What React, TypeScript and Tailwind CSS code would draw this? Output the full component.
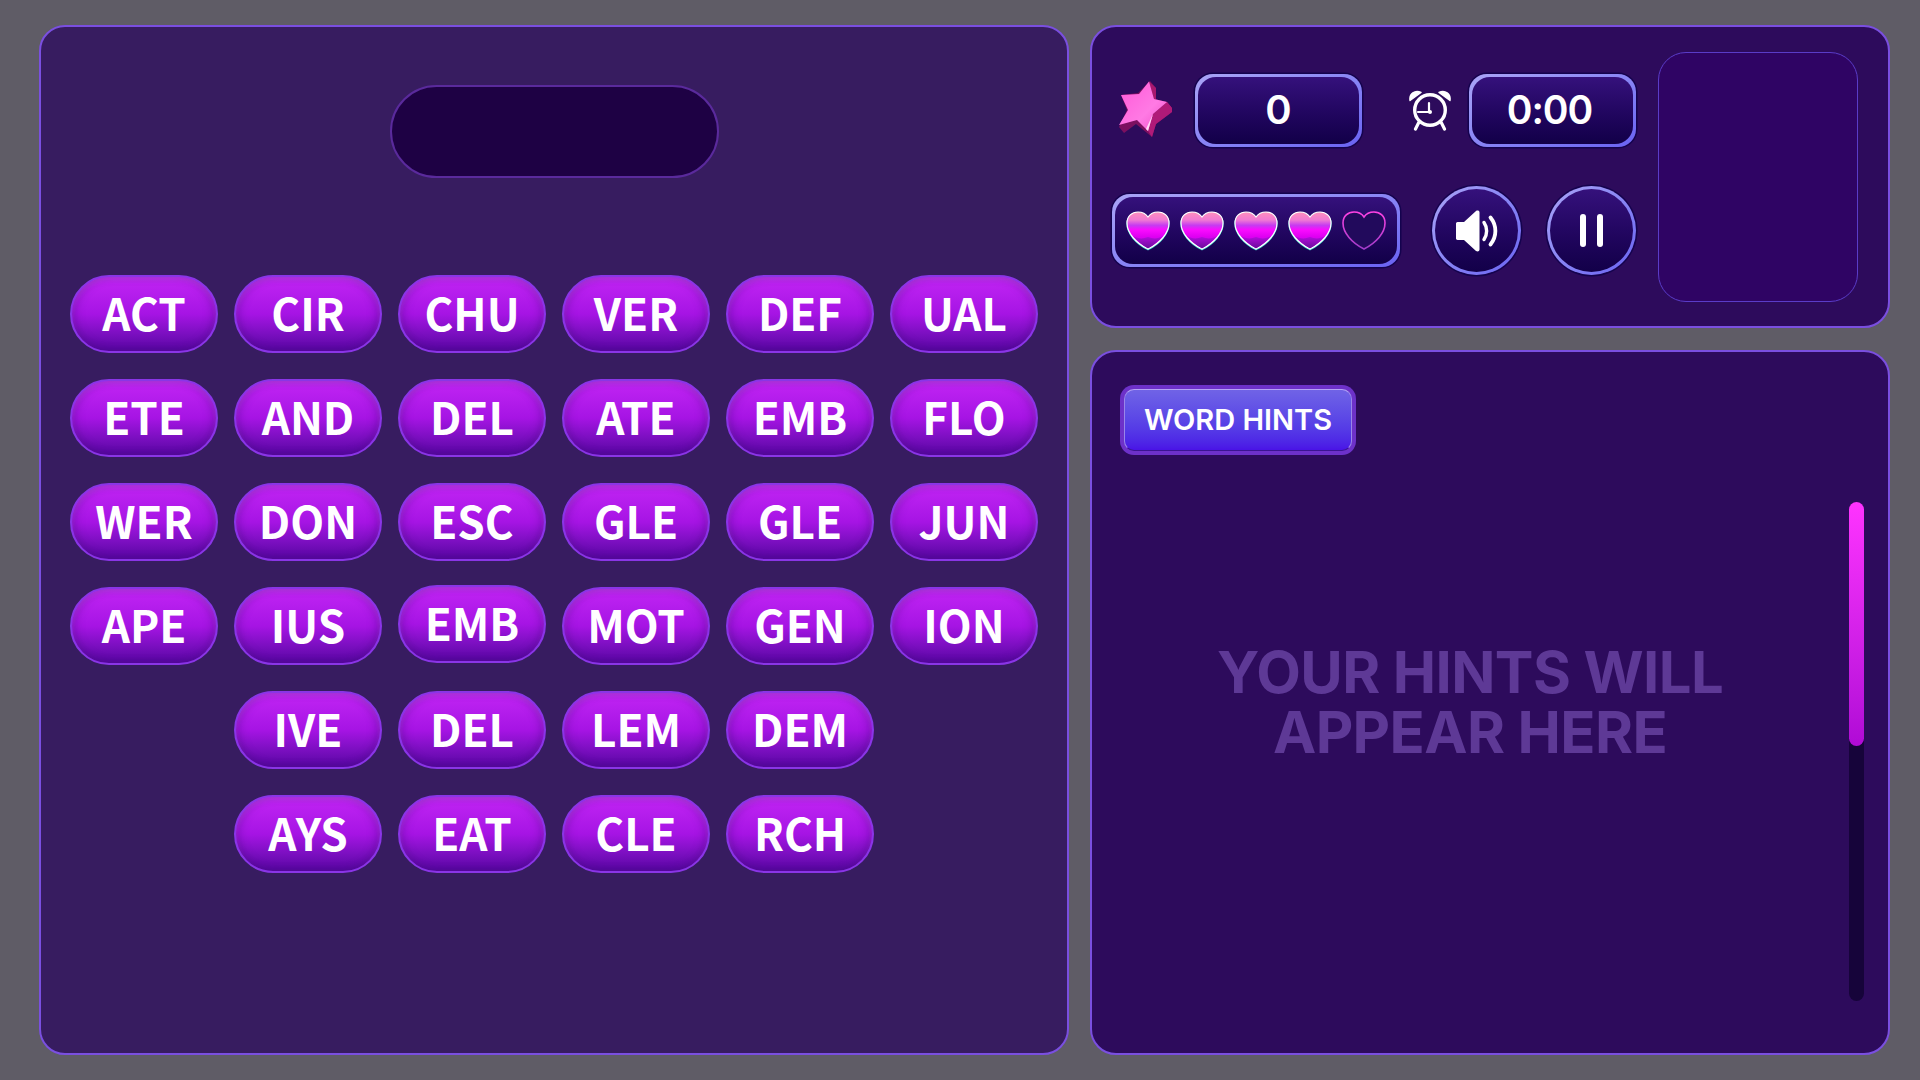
const rows = [
  ["ACT", "CIR", "CHU", "VER", "DEF", "UAL"],
  ["ETE", "AND", "DEL", "ATE", "EMB", "FLO"],
  ["WER", "DON", "ESC", "GLE", "GLE", "JUN"],
  ["APE", "IUS", "EMB", "MOT", "GEN", "ION"],
  ["IVE", "DEL", "LEM", "DEM"],
  ["AYS", "EAT", "CLE", "RCH"],
];

function Pill({ label, raised }: { label: string; raised?: boolean }) {
  return (
    <div
      className={`w-[148px] h-[78px] rounded-full border-2 border-[#8a35e6] bg-gradient-to-b from-[#c224f4] via-[#a614e4] to-[#5806a2] shadow-[inset_0_3px_5px_rgba(255,255,255,0.1),inset_4px_0_8px_rgba(60,10,120,0.28),inset_-4px_0_8px_rgba(60,10,120,0.28)] flex items-center justify-center pb-[4px] text-white font-bold text-[44px] font-['Noto_Sans_CJK_SC',sans-serif] leading-none ${raised ? "-translate-y-0.5" : ""}`}
    >
      {label}
    </div>
  );
}

// gradient ring with dark outline, used for the HUD boxes and round buttons
function Ring({ className, children }: { className: string; children: React.ReactNode }) {
  return (
    <div className={`p-[3px] bg-gradient-to-br from-[#aaa4f6] to-[#6a62f2] shadow-[0_0_0_1.5px_#14034e] ${className}`}>
      <div className="w-full h-full rounded-[inherit] bg-gradient-to-b from-[#35117c] to-[#120048] flex items-center justify-center text-white">
        {children}
      </div>
    </div>
  );
}

const HEART = "M22 38 C10 32 1 22 1 12 C1 5 6 1 12 1 C16 1 20 3 22 6 C24 3 28 1 32 1 C38 1 43 5 43 12 C43 22 34 32 22 38 Z";

function Heart({ id, empty }: { id: string; empty?: boolean }) {
  if (empty) {
    return (
      <svg width="44" height="40" viewBox="0 0 44 40" className="block">
        <defs>
          <linearGradient id={id} x1="0" y1="0" x2="0" y2="1">
            <stop offset="0" stopColor="#ff42e4" />
            <stop offset="1" stopColor="#a03cc8" />
          </linearGradient>
        </defs>
        <path d={HEART} fill="#220a5c" stroke={`url(#${id})`} strokeWidth="1.6" />
      </svg>
    );
  }
  return (
    <svg width="44" height="40" viewBox="0 0 44 40" className="block">
      <defs>
        <linearGradient id={id} x1="0" y1="0" x2="0" y2="1">
          <stop offset="0" stopColor="#ff8fbc" />
          <stop offset="0.22" stopColor="#f078d4" />
          <stop offset="0.36" stopColor="#c63cf0" />
          <stop offset="0.48" stopColor="#fa0cff" />
          <stop offset="0.66" stopColor="#e000f2" />
          <stop offset="1" stopColor="#a808d8" />
        </linearGradient>
        <linearGradient id={`${id}-low`} x1="0" y1="0" x2="0" y2="1">
          <stop offset="0" stopColor="#b80ce0" />
          <stop offset="1" stopColor="#6a0c9c" />
        </linearGradient>
      </defs>
      <path d={HEART} transform="translate(0 0.8)" fill="none" stroke="#3fe0d0" strokeWidth="1.2" />
      <path d={HEART} fill={`url(#${id})`} stroke="#ffffff" strokeWidth="1.2" />
      <path d="M7 25 C12 28 17 28 22 26 C27 28 32 28 37 25 C33 30 28 34 22 37.2 C16 34 11 30 7 25 Z" fill={`url(#${id}-low)`} />
    </svg>
  );
}

function Star() {
  return (
    <svg width="54" height="58" viewBox="0 0 54 58" className="block">
      <defs>
        <linearGradient id="starFace" x1="0" y1="0" x2="1" y2="1">
          <stop offset="0" stopColor="#ff58d8" />
          <stop offset="0.6" stopColor="#ff7ae4" />
          <stop offset="1" stopColor="#f04cc8" />
        </linearGradient>
      </defs>
      {/* extruded back */}
      <path d="M31 1 L37 8 L37 20 L53 28 L53 32 L37 44 L33 57 L17 44 L5 53 L0 47 L8 30 L2 15 L19 13 Z" fill="#7c1060" />
      <path d="M30 1.5 L37 8 L37 20 L53 28 L48 22 L35 19 Z" fill="#a8186e" />
      <path d="M48 22 L53 28 L53 32 L37 44 L33 57 L29 51 L34 34 Z" fill="#b01a78" />
      {/* face */}
      <path d="M30 1.5 L35 19 L48 22 L34 34 L29 51 L18 40 L0 45 L9 30 L2 15 L20 14 Z" fill="url(#starFace)" />
      <path d="M34 34 L29 51 L27 49 Z" fill="#ffd8f4" />
    </svg>
  );
}

function AlarmIcon() {
  return (
    <svg width="42" height="41" viewBox="0 0 42 41" className="block" fill="none" stroke="#ffffff" strokeLinecap="round">
      <circle cx="21" cy="20" r="15.3" strokeWidth="3.4" />
      <path d="M1 10.5 C0 4 6 -0.5 12 2.5 Z" fill="#ffffff" strokeWidth="1.4" strokeLinejoin="round" />
      <path d="M41 10.5 C42 4 36 -0.5 30 2.5 Z" fill="#ffffff" strokeWidth="1.4" strokeLinejoin="round" />
      <path d="M9.5 33 L6.5 39 M32.5 33 L35.5 39" strokeWidth="3.2" />
      <path d="M20 13 V22 H9" strokeWidth="2.2" />
      <circle cx="21" cy="22" r="2" fill="#ffffff" stroke="none" />
    </svg>
  );
}

function SpeakerIcon() {
  return (
    <svg width="42" height="42" viewBox="0 0 42 42" className="block" fill="none">
      <path d="M1.5 12 H8 L20 1 C21.5 0 23.5 0.5 23.5 2.5 V39.5 C23.5 41.5 21.5 42 20 41 L8 30 H1.5 C0.7 30 0 29.2 0 28.5 V13.5 C0 12.8 0.7 12 1.5 12 Z" fill="#ffffff" />
      <path d="M28 12.5 C31.5 17.5 31.5 24.5 28 29.5" stroke="#ffffff" strokeWidth="3.4" strokeLinecap="round" />
      <path d="M34.5 7.5 C41 15.5 41 26.5 34.5 34.5" stroke="#ffffff" strokeWidth="3.8" strokeLinecap="round" />
    </svg>
  );
}

export default function App() {
  return (
    <div className="w-full h-screen bg-[#5f5c66] flex gap-[21px] pl-[39px] pr-[30px] pt-[25px] pb-[25px] font-['Inter',sans-serif]">
      {/* Word panel */}
      <div className="w-[1030px] shrink-0 border-2 border-[#7a4fe0] rounded-[26px] bg-[#371c60] flex flex-col items-center pt-[58px]">
        <div className="w-[329px] h-[93px] rounded-full bg-[#1e0144] border-2 border-[#5a2a9c]" />
        <div className="mt-[97px] w-[968px] flex flex-col items-center gap-[26px]">
          {rows.map((row, r) => (
            <div key={r} className="flex gap-[16px]">
              {row.map((label, i) => (
                <Pill key={i} label={label} raised={r === 3 && i === 2} />
              ))}
            </div>
          ))}
        </div>
      </div>

      <div className="w-[800px] shrink-0 flex flex-col gap-[22px]">
        {/* HUD */}
        <div className="h-[303px] border-2 border-[#7a4fe0] rounded-[26px] bg-[#2d0b5c] flex items-start pl-[20px] pt-[25px]">
          <div className="w-[524px] flex flex-col gap-[39px] pt-[22px]">
            <div className="flex items-center">
              <div className="w-[83px] pl-[7px] pb-[4px]">
                <Star />
              </div>
              <Ring className="w-[167px] h-[73px] rounded-[18px]">
                <span className="text-[40px] font-semibold leading-none pb-[2px]">0</span>
              </Ring>
              <div className="w-[107px] pl-[47px]">
                <AlarmIcon />
              </div>
              <Ring className="w-[167px] h-[73px] rounded-[18px]">
                <span className="text-[39px] font-semibold leading-none tracking-tight pb-[2px] pr-[6px]">0:00</span>
              </Ring>
            </div>
            <div className="flex items-center">
              <Ring className="w-[288px] h-[73px] rounded-[18px]">
                <div className="flex gap-[10px]">
                  <Heart id="h1" />
                  <Heart id="h2" />
                  <Heart id="h3" />
                  <Heart id="h4" />
                  <Heart id="h5" empty />
                </div>
              </Ring>
              <Ring className="w-[89px] h-[89px] rounded-full ml-[32px]">
                <SpeakerIcon />
              </Ring>
              <Ring className="w-[89px] h-[89px] rounded-full ml-[26px]">
                <div className="flex gap-[11px]">
                  <div className="w-[6px] h-[33px] rounded-full bg-white" />
                  <div className="w-[6px] h-[33px] rounded-full bg-white" />
                </div>
              </Ring>
            </div>
          </div>
          <div className="w-[200px] h-[250px] ml-[22px] rounded-[28px] border border-[#5a3cc8] bg-[#2f0464]" />
        </div>

        {/* Hints */}
        <div className="flex-1 border-2 border-[#7a4fe0] rounded-[26px] bg-[#2d0b5c] flex pl-[28px] pt-[33px] pr-[24px]">
          <div className="flex-1 flex flex-col items-start">
            <div className="w-[236px] h-[70px] rounded-[14px] bg-[#6d31c9] p-[4px]">
              <div className="w-full h-full rounded-[10px] border border-t-[#b5a3f5] border-x-[#9a85ea] border-b-[#3a1590] bg-gradient-to-b from-[#7063e6] to-[#4a12e6] flex items-center justify-center text-white text-[29px] font-semibold">
                WORD HINTS
              </div>
            </div>
            <div className="w-full pr-[29px] mt-[187px] text-center text-[58px] leading-[60px] font-bold tracking-[-0.6px] text-[#5e3996]">
              YOUR HINTS WILL
              <br />
              APPEAR HERE
            </div>
          </div>
          <div className="w-[15px] h-[499px] mt-[117px] rounded-full bg-[#16043a]">
            <div className="h-[244px] rounded-full bg-gradient-to-b from-[#ff33ff] to-[#b00ad6]" />
          </div>
        </div>
      </div>
    </div>
  );
}
